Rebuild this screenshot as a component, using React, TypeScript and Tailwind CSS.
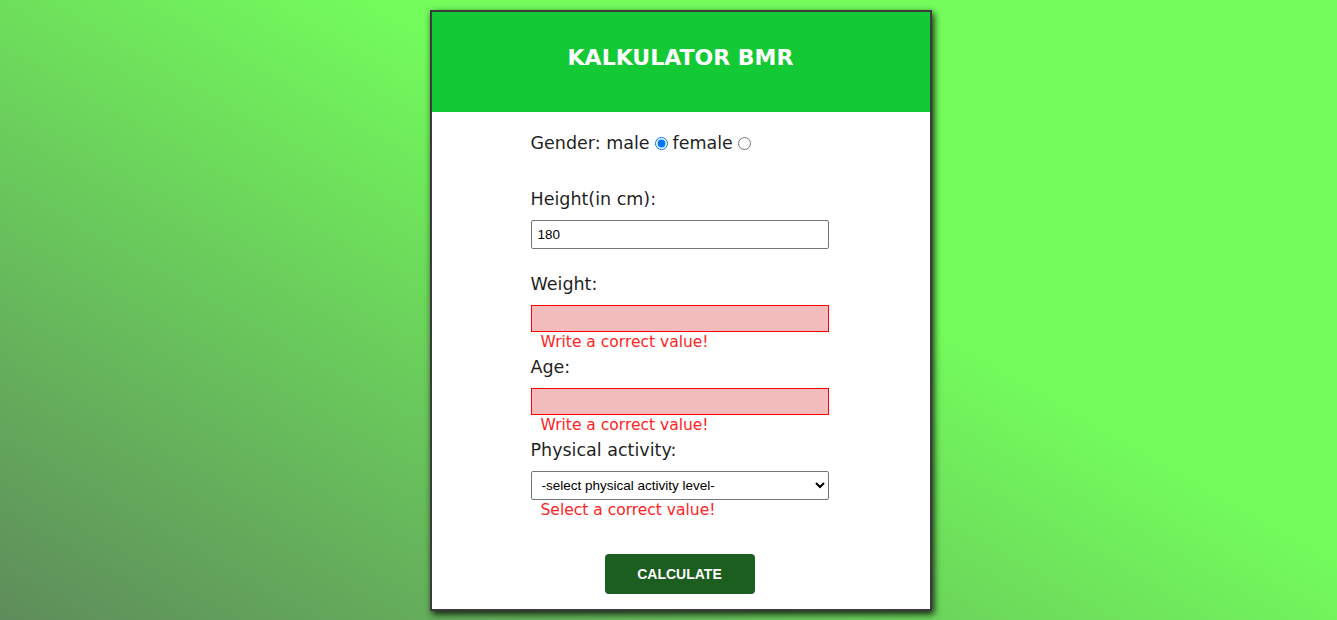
import { useState } from "react";

const labelCls = "block h-[22px] leading-[22px] text-[17.5px] text-[#1f1f1f]";
const errorCls = "h-[20px] pl-[10px] leading-[20px] text-[15.5px] text-[#ff2323]";

export default function App() {
  const [gender, setGender] = useState("male");
  const [height, setHeight] = useState("180");
  const [weight, setWeight] = useState("");
  const [age, setAge] = useState("");
  const [activity, setActivity] = useState("");

  return (
    <div className="min-h-screen w-full bg-[linear-gradient(30deg,#5e8c5b_0%,#73fc5c_60%)] pl-6 pt-[10px] [font-family:'DejaVu_Sans',sans-serif]">
      <div className="mx-auto w-[502px] border-2 border-[#3b3b3b] bg-white shadow-[2px_3px_7px_rgba(0,0,0,0.85)]">
        <div className="flex h-[100px] items-center justify-center bg-[#13c934] pb-[10px]">
          <h1 className="text-[22px] font-bold text-white">KALKULATOR BMR</h1>
        </div>

        <form className="pb-[15px] pl-[99px] pt-[20px]" onSubmit={(e) => e.preventDefault()}>
          <div className="flex h-[22px] items-center text-[17.5px] text-[#1f1f1f]">
            <span>Gender: male</span>
            <input
              type="radio"
              name="gender"
              checked={gender === "male"}
              onChange={() => setGender("male")}
              className="mx-[5px] h-[13px] w-[13px]"
            />
            <span>female</span>
            <input
              type="radio"
              name="gender"
              checked={gender === "female"}
              onChange={() => setGender("female")}
              className="mx-[5px] h-[13px] w-[13px]"
            />
          </div>

          <label className={`${labelCls} mt-[34px]`}>Height(in cm):</label>
          <input
            type="text"
            value={height}
            onChange={(e) => setHeight(e.target.value)}
            className="mt-[10px] block h-[29px] w-[298px] rounded-[2px] border border-[#767676] px-[6px] text-[13.5px] text-black [font-family:'Liberation_Sans',Arial,sans-serif]"
          />

          <label className={`${labelCls} mt-[24px]`}>Weight:</label>
          <input
            type="text"
            value={weight}
            onChange={(e) => setWeight(e.target.value)}
            className="mt-[10px] block h-[27px] w-[298px] border border-[#ff0000] bg-[#f2bcbc] px-[6px] text-[13.5px] [font-family:'Liberation_Sans',Arial,sans-serif]"
          />
          <div className={errorCls}>Write a correct value!</div>

          <label className={`${labelCls} mt-[4px]`}>Age:</label>
          <input
            type="text"
            value={age}
            onChange={(e) => setAge(e.target.value)}
            className="mt-[10px] block h-[27px] w-[298px] border border-[#ff0000] bg-[#f2bcbc] px-[6px] text-[13.5px] [font-family:'Liberation_Sans',Arial,sans-serif]"
          />
          <div className={errorCls}>Write a correct value!</div>

          <label className={`${labelCls} mt-[4px]`}>Physical activity:</label>
          <select
            value={activity}
            onChange={(e) => setActivity(e.target.value)}
            className="mt-[10px] block h-[29px] w-[298px] rounded-[2px] border border-[#767676] bg-white pl-[6px] text-[13.5px] text-black [font-family:'Liberation_Sans',Arial,sans-serif]"
          >
            <option value="">-select physical activity level-</option>
            <option value="1.2">sedentary</option>
            <option value="1.375">lightly active</option>
            <option value="1.55">moderately active</option>
            <option value="1.725">very active</option>
          </select>
          <div className={errorCls}>Select a correct value!</div>

          <button
            type="submit"
            className="mt-[34px] ml-[74px] h-[40px] w-[150px] rounded-[4px] bg-[#1b5e20] text-[14px] font-bold text-white [font-family:'Liberation_Sans',Arial,sans-serif]"
          >
            CALCULATE
          </button>
        </form>
      </div>
    </div>
  );
}
